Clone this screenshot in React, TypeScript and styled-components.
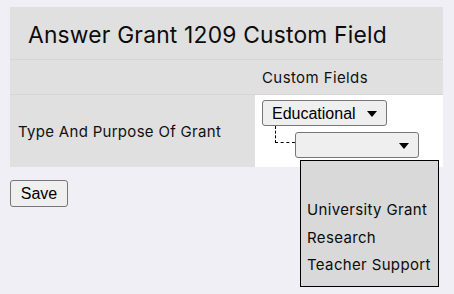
import React from "react";
import styled, { createGlobalStyle } from "styled-components";

const Global = createGlobalStyle`
  html, body { margin: 0; padding: 0; background: #efeff5; }
  body { font-family: Inter, "Noto Sans", sans-serif; color: #111; }
`;

const Page = styled.div`
  min-height: 294px;
  box-sizing: border-box;
  padding: 7px 11px 0 10px;
`;

const Card = styled.div`
  background: #e0e0e0;
  width: 433px;
`;

const Title = styled.h1`
  margin: 0;
  box-sizing: border-box;
  height: 53px;
  display: flex;
  align-items: center;
  padding: 3px 0 0 18px;
  font-size: 22.8px;
  font-weight: 400;
  letter-spacing: 0.2px;
  color: #0c0c0c;
  border-bottom: 1px solid #d6d6d6;
`;

const Row = styled.div<{ $h: number }>`
  display: grid;
  grid-template-columns: 245px 188px;
  height: ${(p) => p.$h}px;
`;

const HeadRow = styled(Row)`
  border-bottom: 1px solid #d6d6d6;
`;

const Cell = styled.div`
  display: flex;
  align-items: center;
  padding: 1px 0 0 8px;
  font-size: 15px;
  letter-spacing: 0.3px;
`;

const HeadCell = styled(Cell)`
  padding-left: 7px;
  letter-spacing: 0.4px;
`;

const FieldCell = styled.div`
  position: relative;
  background: #fff;
  padding: 5px 0 0 7px;
`;

const SelectBtn = styled.div<{ $w: number }>`
  box-sizing: border-box;
  width: ${(p) => p.$w}px;
  height: 26px;
  background: #efefef;
  border: 1px solid #767676;
  border-radius: 3px;
  display: flex;
  align-items: center;
  justify-content: space-between;
  padding: 1px 9px 0 9px;
  font-family: "Liberation Sans", Arial, sans-serif;
  font-size: 16px;
  color: #000;
`;

const Tri = styled.span`
  width: 0;
  height: 0;
  border-left: 5px solid transparent;
  border-right: 5px solid transparent;
  border-top: 6px solid #000;
`;

const SubRow = styled.div`
  display: flex;
  align-items: flex-start;
  margin-left: 13px;
`;

const Connector = styled.div`
  width: 20px;
  height: 17px;
  border-left: 1px dashed #000;
  border-bottom: 1px dashed #000;
  box-sizing: border-box;
`;

const SubSelect = styled(SelectBtn)`
  margin-top: 6px;
  justify-content: flex-end;
  padding-right: 9px;
`;

const List = styled.ul`
  position: absolute;
  left: 45px;
  top: 65px;
  width: 139px;
  height: 127px;
  box-sizing: border-box;
  margin: 0;
  padding: 35px 0 0 6px;
  list-style: none;
  background: #d9d9d9;
  border: 1px solid #000;
  font-size: 15px;
  letter-spacing: 0.35px;
  color: #0c0c0c;
  z-index: 2;
`;

const Item = styled.li`
  height: 27.5px;
  line-height: 27.5px;
  white-space: nowrap;
`;

const SaveBtn = styled.button`
  margin-top: 13px;
  height: 27px;
  width: 58px;
  box-sizing: border-box;
  font-family: "Liberation Sans", Arial, sans-serif;
  font-size: 16px;
  background: #efefef;
  border: 1px solid #767676;
  border-radius: 3px;
  color: #000;
  padding: 0;
`;

export default function App() {
  return (
    <>
      <Global />
      <Page>
        <Card>
          <Title>Answer Grant 1209 Custom Field</Title>
          <HeadRow $h={34}>
            <Cell />
            <HeadCell>Custom Fields</HeadCell>
          </HeadRow>
          <Row $h={72}>
            <Cell>Type And Purpose Of Grant</Cell>
            <FieldCell>
              <SelectBtn $w={125}>
                Educational <Tri />
              </SelectBtn>
              <SubRow>
                <Connector />
                <SubSelect $w={124}>
                  <Tri />
                </SubSelect>
              </SubRow>
              <List>
                <Item>University Grant</Item>
                <Item>Research</Item>
                <Item>Teacher Support</Item>
              </List>
            </FieldCell>
          </Row>
        </Card>
        <SaveBtn>Save</SaveBtn>
      </Page>
    </>
  );
}
